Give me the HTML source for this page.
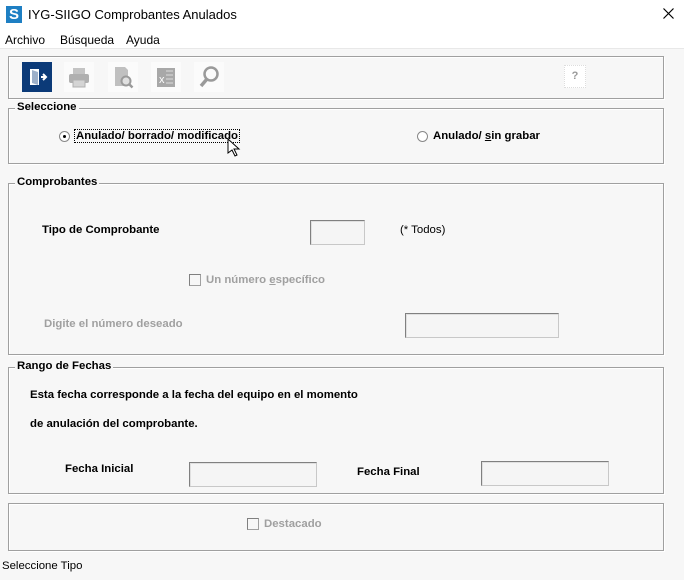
<!DOCTYPE html>
<html><head><meta charset="utf-8"><style>
*{margin:0;padding:0;box-sizing:border-box}
body{width:684px;height:580px;background:#f7f7f7;position:relative;overflow:hidden;font-family:"Liberation Sans",Arial,sans-serif;font-size:11.4px;color:#000}
.a{position:absolute;white-space:nowrap}
.b{font-weight:bold}
.box{position:absolute;border:1px solid #a0a0a0;box-shadow:1px 1px 0 #fff, inset 1px 1px 0 #fff}
.leg{position:absolute;background:#f7f7f7;font-weight:bold;padding:0 2px;left:6px;top:-8px;font-size:11.4px}
.inp{position:absolute;border:1px solid #c8c8c8;border-top-color:#808080;border-left-color:#808080;background:#f5f5f5;box-shadow:inset 1px 1px 0 #e0e0e0}
.gray{color:#a0a0a0}
.btn{position:absolute;top:62px;width:30px;height:30px;background:#fbfbfb}
</style></head><body>
<div class="a" style="left:0;top:0;width:684px;height:48px;background:#fff"></div>
<div class="a" style="left:6px;top:6px;width:16px;height:17px;background:#1e7fc3;color:#fff;font-weight:bold;font-size:15px;text-align:center;line-height:17px">S</div>
<div class="a" style="left:28px;top:7px;font-size:13px">IYG-SIIGO Comprobantes Anulados</div>
<svg class="a" style="left:663px;top:8px" width="11" height="11"><path d="M0.5 0.5l10 10M10.5 0.5l-10 10" stroke="#000" stroke-width="1.2"/></svg>
<div class="a" style="left:5px;top:33px;font-size:12px">Archivo</div>
<div class="a" style="left:60px;top:33px;font-size:12px">Búsqueda</div>
<div class="a" style="left:126px;top:33px;font-size:12px">Ayuda</div>
<div class="a" style="left:0;top:48px;width:684px;height:1px;background:#e8e8e8"></div>

<div class="box" style="left:8px;top:56px;width:656px;height:43px"></div>
<div class="btn" style="left:22px;background:#0b3a78">
<svg width="30" height="30"><path d="M8 7h9v16H8z" fill="#fff"/><path d="M10 8l6 2v13l-6-2z" fill="#0b3a78" opacity=".4"/><path d="M19 15h4M21 12l3 3-3 3" stroke="#fff" stroke-width="2" fill="none"/></svg></div>
<div class="btn" style="left:64px"><svg width="30" height="30"><rect x="9" y="6" width="12" height="6" fill="#c4c4c4"/><rect x="5" y="12" width="20" height="9" rx="2" fill="#b0b0b0"/><rect x="9" y="18" width="12" height="7" fill="#d4d4d4" stroke="#b0b0b0"/></svg></div>
<div class="btn" style="left:108px"><svg width="30" height="30"><path d="M7 5h10l3 3v16H7z" fill="#c0c0c0"/><circle cx="18" cy="19" r="4.5" fill="#e0e0e0" stroke="#9a9a9a" stroke-width="2"/><path d="M21 22l3.5 3.5" stroke="#9a9a9a" stroke-width="2.5"/></svg></div>
<div class="btn" style="left:151px"><svg width="30" height="30"><rect x="6" y="6" width="18" height="19" fill="#a8a8a8"/><text x="8" y="21" font-size="11" fill="#fff" font-family="Liberation Sans">x</text><path d="M15 9h7M15 13h7M15 17h7M15 21h7" stroke="#ddd"/></svg></div>
<div class="btn" style="left:194px"><svg width="30" height="30"><circle cx="17" cy="12" r="6.5" fill="none" stroke="#9a9a9a" stroke-width="2.5"/><path d="M13 17l-6 7" stroke="#9a9a9a" stroke-width="3.5"/></svg></div>
<div class="a" style="left:564px;top:65px;width:22px;height:23px;background:#fff;border:1px dotted #ddd;color:#999;font-weight:bold;text-align:center;line-height:21px;font-size:11px">?</div>

<div class="box" style="left:8px;top:108px;width:656px;height:56px"><div class="leg">Seleccione</div></div>
<div class="a" style="left:59px;top:131px;width:11px;height:11px;border-radius:50%;border:1px solid #888;background:#fff"><div style="position:absolute;left:3px;top:3px;width:3px;height:3px;background:#000;border-radius:50%"></div></div>
<div class="a b" style="left:74px;top:129px;border:1px dotted #000;padding:0 1px">Anulado/ borrado/ modificado</div>
<div class="a" style="left:417px;top:131px;width:11px;height:11px;border-radius:50%;border:1px solid #888;background:#fff"></div>
<div class="a b" style="left:433px;top:130px">Anulado/ <u>s</u>in grabar</div>
<svg class="a" style="left:227px;top:138px" width="14" height="20"><path d="M1 1v14l4-3 3 6 2-1-3-6h5z" fill="#fff" stroke="#000"/></svg>

<div class="box" style="left:8px;top:183px;width:656px;height:172px"><div class="leg">Comprobantes</div></div>
<div class="a b" style="left:42px;top:224px">Tipo de Comprobante</div>
<div class="inp" style="left:310px;top:220px;width:55px;height:25px"></div>
<div class="a" style="left:400px;top:224px">(* Todos)</div>
<div class="a" style="left:189px;top:274px;width:12px;height:12px;border:1px solid #a0a0a0;border-top-color:#808080;border-left-color:#808080"></div>
<div class="a b gray" style="left:206px;top:274px">Un número <u>e</u>specífico</div>
<div class="a b gray" style="left:44px;top:318px">Digite el número deseado</div>
<div class="inp" style="left:405px;top:313px;width:154px;height:25px"></div>

<div class="box" style="left:8px;top:367px;width:656px;height:127px"><div class="leg">Rango de Fechas</div></div>
<div class="a b" style="left:30px;top:389px">Esta fecha corresponde a la fecha del equipo en el momento</div>
<div class="a b" style="left:30px;top:418px">de anulación del comprobante.</div>
<div class="a b" style="left:65px;top:463px">Fecha Inicial</div>
<div class="inp" style="left:189px;top:462px;width:128px;height:25px"></div>
<div class="a b" style="left:357px;top:466px">Fecha Final</div>
<div class="inp" style="left:481px;top:461px;width:128px;height:25px"></div>

<div class="box" style="left:8px;top:503px;width:656px;height:48px"></div>
<div class="a" style="left:247px;top:518px;width:12px;height:12px;border:1px solid #a0a0a0;border-top-color:#808080;border-left-color:#808080"></div>
<div class="a b gray" style="left:264px;top:518px">Destacado</div>
<div class="a" style="left:2px;top:560px">Seleccione Tipo</div>
</body></html>
